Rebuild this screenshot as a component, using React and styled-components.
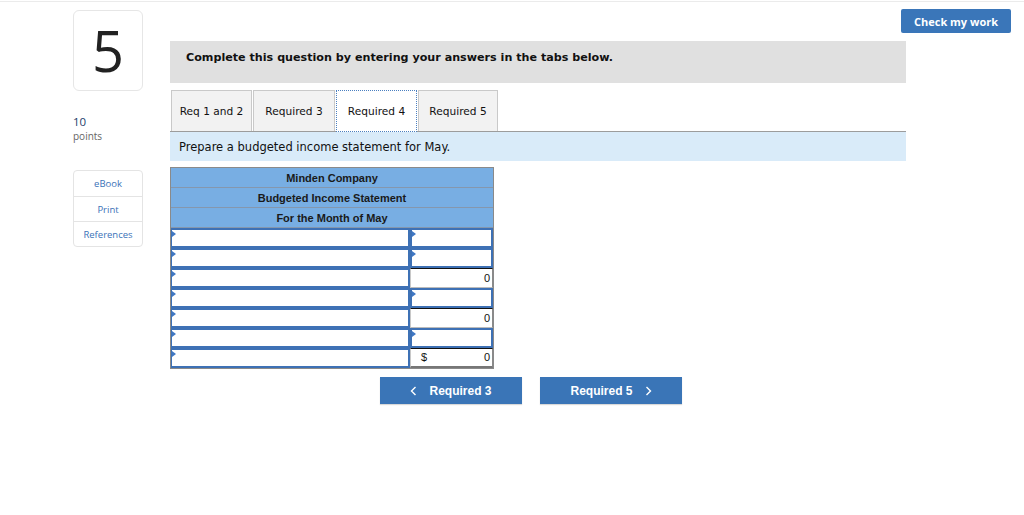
import React from "react";
import styled, { createGlobalStyle } from "styled-components";

const Global = createGlobalStyle`
  html, body { margin: 0; padding: 0; background: #fff; }
  body { font-family: "Open Sans", sans-serif; color: #222; }
  * { box-sizing: border-box; }
`;

const Page = styled.div`
  position: relative;
  width: 1024px;
  height: 515px;
  overflow: hidden;
`;

const TopRule = styled.div`
  height: 1px;
  margin-top: 1px;
  background: #ebebeb;
`;

const CheckButton = styled.button`
  position: absolute;
  top: 9px;
  right: 13px;
  width: 110px;
  height: 24px;
  border: none;
  border-radius: 2px;
  background: #3a76b9;
  color: #fff;
  font-family: "Open Sans", sans-serif;
  font-weight: 700;
  font-size: 11px;
  padding: 0;
`;

const Body = styled.div`
  display: flex;
  align-items: flex-start;
  padding-left: 73px;
  gap: 27px;
`;

const Sidebar = styled.aside`
  width: 70px;
  margin-top: 8px;
  display: flex;
  flex-direction: column;
`;

const NumberBox = styled.div`
  height: 81px;
  border: 1px solid #e6e6e6;
  border-radius: 6px;
  display: flex;
  align-items: center;
  justify-content: center;
  font-family: "Open Sans", sans-serif;
  font-size: 56px;
  line-height: 1;
  color: #222;
  padding-bottom: 2px;
`;

const Points = styled.div`
  margin-top: 24px;
  font-family: "Open Sans", sans-serif;
  font-size: 11.5px;
  line-height: 14px;
  color: #1c3c6a;
`;

const PointsLabel = styled.div`
  font-family: "Open Sans", sans-serif;
  font-size: 10px;
  line-height: 15px;
  color: #666;
`;

const LinkBox = styled.div`
  margin-top: 26px;
  border: 1px solid #e4e4e4;
  border-radius: 4px;
  display: flex;
  flex-direction: column;
`;

const LinkItem = styled.div`
  height: 25px;
  display: flex;
  align-items: center;
  justify-content: center;
  font-family: "Open Sans", sans-serif;
  font-size: 9.5px;
  color: #3b72b8;
  border-top: ${(p) => (p.$first ? "none" : "1px solid #e4e4e4")};
`;

const Main = styled.main`
  width: 736px;
  margin-top: 39px;
  display: flex;
  flex-direction: column;
`;

const Instruction = styled.div`
  height: 42px;
  background: #e0e0e0;
  padding: 9px 0 0 16px;
  font-family: "DejaVu Sans", Verdana, sans-serif;
  font-weight: 700;
  font-size: 11.15px;
  line-height: 16px;
  color: #111;
`;

const TabBar = styled.div`
  margin-top: 7px;
  display: flex;
  gap: 1px;
  padding-left: 1px;
  border-bottom: 1px solid #9c9c9c;
`;

const Tab = styled.div`
  width: ${(p) => p.$w}px;
  display: flex;
  align-items: center;
  justify-content: center;
  font-family: "DejaVu Sans", Verdana, sans-serif;
  font-size: 10.6px;
  color: #111;
  background: ${(p) => (p.$active ? "#fff" : "#f2f2f2")};
  border: ${(p) => (p.$active ? "1px dotted #4a7fc0" : "1px solid #c9c9c9")};
  border-bottom: ${(p) => (p.$active ? "1px dotted #4a7fc0" : "none")};
  margin-bottom: ${(p) => (p.$active ? "-1px" : "0")};
  height: ${(p) => (p.$active ? "42px" : "41px")};
`;

const Prompt = styled.div`
  height: 29px;
  background: #d9ebf9;
  padding-left: 9px;
  display: flex;
  align-items: center;
  font-family: "DejaVu Sans", Verdana, sans-serif;
  font-size: 11.5px;
  color: #111;
`;

const Sheet = styled.div`
  margin-top: 6px;
  width: 324px;
  border: 1px solid #8a8a8a;
  display: flex;
  flex-direction: column;
`;

const HeadRow = styled.div`
  height: 20px;
  background: #78aee3;
  border-bottom: 1px solid #8597ad;
  display: flex;
  align-items: center;
  justify-content: center;
  font-family: "Liberation Sans", Arial, sans-serif;
  font-weight: 700;
  font-size: 11px;
  color: #1a1a1a;
`;

const Row = styled.div`
  display: grid;
  grid-template-columns: 239px 1fr;
  height: 20px;
  background: #fff;
`;

const InputCell = styled.div`
  position: relative;
  border: 2px solid #3e71b5;
  border-left-width: ${(p) => (p.$right ? "2px" : "1px")};
  background: #fff;
  &::before {
    content: "";
    position: absolute;
    top: 1px;
    left: 0;
    border-top: 3px solid transparent;
    border-bottom: 3px solid transparent;
    border-left: 4px solid #3f78c4;
  }
`;

const ValueCell = styled.div`
  display: flex;
  align-items: center;
  justify-content: ${(p) => (p.$dollar ? "space-between" : "flex-end")};
  padding: 0 2px 1px ${(p) => (p.$dollar ? "10px" : "0")};
  border-top: 1px solid #111;
  border-right: 1px solid #8a8a8a;
  border-bottom: ${(p) => (p.$dollar ? "2px solid #777" : "1px solid #bbb")};
  border-left: 1px solid #c8c8c8;
  font-family: "Liberation Sans", Arial, sans-serif;
  font-size: 11px;
  color: #111;
`;

const NavRow = styled.div`
  margin-top: 8px;
  padding-left: 210px;
  display: flex;
  gap: 18px;
`;

const NavButton = styled.button`
  width: 142px;
  height: 27px;
  border: none;
  background: #3a75b7;
  color: #fff;
  font-family: "Liberation Sans", Arial, sans-serif;
  font-weight: 700;
  font-size: 12px;
  display: flex;
  align-items: center;
  justify-content: center;
  gap: 12px;
  padding: 0;
  box-shadow: 0 1px 1px rgba(0, 0, 0, 0.15);
`;

const Chevron = ({ dir }) => (
  <svg width="7" height="10" viewBox="0 0 7 10">
    <path
      d={dir === "left" ? "M5.5 1 L1.5 5 L5.5 9" : "M1.5 1 L5.5 5 L1.5 9"}
      fill="none"
      stroke="#fff"
      strokeWidth="1.4"
    />
  </svg>
);

const rows = [
  { value: null },
  { value: null },
  { value: "0" },
  { value: null },
  { value: "0" },
  { value: null },
  { value: "0", dollar: true },
];

export default function App() {
  return (
    <Page>
      <Global />
      <TopRule />
      <CheckButton>Check my work</CheckButton>
      <Body>
        <Sidebar>
          <NumberBox>5</NumberBox>
          <Points>10</Points>
          <PointsLabel>points</PointsLabel>
          <LinkBox>
            <LinkItem $first>eBook</LinkItem>
            <LinkItem>Print</LinkItem>
            <LinkItem>References</LinkItem>
          </LinkBox>
        </Sidebar>
        <Main>
          <Instruction>
            Complete this question by entering your answers in the tabs below.
          </Instruction>
          <TabBar>
            <Tab $w={81}>Req 1 and 2</Tab>
            <Tab $w={82}>Required 3</Tab>
            <Tab $w={81} $active>
              Required 4
            </Tab>
            <Tab $w={80}>Required 5</Tab>
          </TabBar>
          <Prompt>Prepare a budgeted income statement for May.</Prompt>
          <Sheet>
            <HeadRow>Minden Company</HeadRow>
            <HeadRow>Budgeted Income Statement</HeadRow>
            <HeadRow>For the Month of May</HeadRow>
            {rows.map((r, i) => (
              <Row key={i}>
                <InputCell />
                {r.value === null ? (
                  <InputCell $right />
                ) : (
                  <ValueCell $dollar={r.dollar}>
                    {r.dollar && <span>$</span>}
                    <span>{r.value}</span>
                  </ValueCell>
                )}
              </Row>
            ))}
          </Sheet>
          <NavRow>
            <NavButton>
              <Chevron dir="left" />
              Required 3
            </NavButton>
            <NavButton>
              Required 5
              <Chevron dir="right" />
            </NavButton>
          </NavRow>
        </Main>
      </Body>
    </Page>
  );
}
